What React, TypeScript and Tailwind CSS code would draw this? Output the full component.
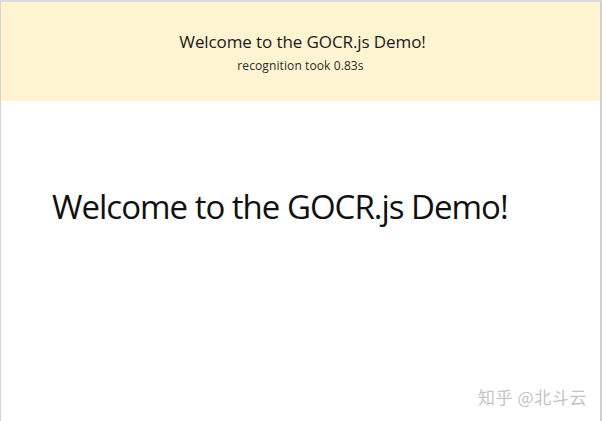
export default function App() {
    return (
        <div className="w-[602px] h-[421px] bg-white border-t-2 border-t-[#dcdcdc] border-l border-l-[#d4d4d4] border-r-2 border-r-[#cfcfcf] font-['Open_Sans',sans-serif] text-[#111] flex flex-col">
            <header className="h-[99px] bg-[#fff4d2] flex flex-col items-center pt-[29px]">
                <h2 className="text-[17px] leading-[22px] tracking-[-0.1px] text-[#1a1a1a] ml-[4px]">Welcome to the GOCR.js Demo!</h2>
                <p className="text-[12px] leading-[16px] mt-[5px] tracking-[0.1px] text-[#2a2a2a]">recognition took 0.83s</p>
            </header>
            <main className="flex-1 flex flex-col pl-[51px] pr-[13px] pt-[84px]">
                <h1 className="text-[33px] leading-[44px] tracking-[-1px]">Welcome to the GOCR.js Demo!</h1>
                <div className="mt-auto mb-[12px] self-end text-[17px] tracking-[0.6px] text-[#c4c4c4] font-['Noto_Sans_CJK_SC',sans-serif]">
                    知乎 @北斗云
                </div>
            </main>
        </div>
    )
}
